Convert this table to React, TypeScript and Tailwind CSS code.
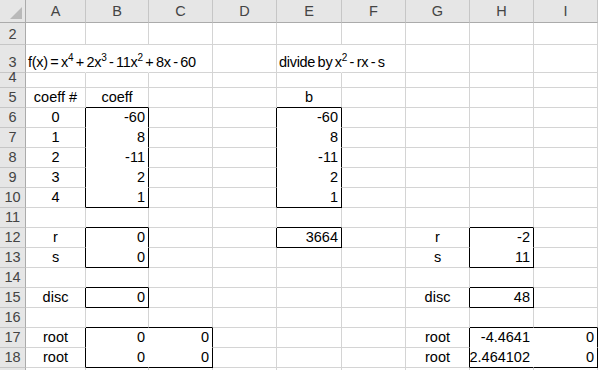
import React from 'react';

type Align = 'left' | 'center' | 'right';

interface CellValue {
  v: React.ReactNode;
  align: Align;
}

interface Range {
  r1: number;
  r2: number;
  c1: number;
  c2: number;
}

const COLS = ['A', 'B', 'C', 'D', 'E', 'F', 'G', 'H', 'I'];
const FIRST_ROW = 2;
const LAST_ROW = 19;

// Ranges with a thin black outline (white fill, so no gridlines inside)
const BOXES: Range[] = [
  { r1: 6, r2: 10, c1: 2, c2: 2 },
  { r1: 6, r2: 10, c1: 5, c2: 5 },
  { r1: 12, r2: 13, c1: 2, c2: 2 },
  { r1: 12, r2: 12, c1: 5, c2: 5 },
  { r1: 12, r2: 13, c1: 8, c2: 8 },
  { r1: 15, r2: 15, c1: 2, c2: 2 },
  { r1: 15, r2: 15, c1: 8, c2: 8 },
  { r1: 17, r2: 18, c1: 2, c2: 3 },
  { r1: 17, r2: 18, c1: 8, c2: 9 },
];

// Cells whose text spills into the next column, hiding that gridline
const SPILL = new Set(['3:1', '3:2', '3:5']);

const Sup = ({ children }: { children: React.ReactNode }) => (
  <sup className="text-[10px] -top-[6px]">{children}</sup>
);

// formula text is set a little tighter so it runs as far as in the sheet
const Formula = ({ children }: { children: React.ReactNode }) => (
  <span className="tracking-[-0.3px] [word-spacing:-1.2px]">{children}</span>
);

const num = (v: string): CellValue => ({ v, align: 'right' });
const mid = (v: string): CellValue => ({ v, align: 'center' });

const CELLS: Record<string, CellValue> = {
  A3: {
    align: 'left',
    v: (
      <Formula>
        f(x) = x<Sup>4</Sup> + 2x<Sup>3</Sup> - 11x<Sup>2</Sup> + 8x - 60
      </Formula>
    ),
  },
  E3: {
    align: 'left',
    v: (
      <Formula>
        divide by x<Sup>2</Sup> - rx - s
      </Formula>
    ),
  },
  A5: mid('coeff #'),
  B5: mid('coeff'),
  E5: mid('b'),
  A6: mid('0'),
  A7: mid('1'),
  A8: mid('2'),
  A9: mid('3'),
  A10: mid('4'),
  B6: num('-60'),
  B7: num('8'),
  B8: num('-11'),
  B9: num('2'),
  B10: num('1'),
  E6: num('-60'),
  E7: num('8'),
  E8: num('-11'),
  E9: num('2'),
  E10: num('1'),
  A12: mid('r'),
  B12: num('0'),
  E12: num('3664'),
  G12: mid('r'),
  H12: num('-2'),
  A13: mid('s'),
  B13: num('0'),
  G13: mid('s'),
  H13: num('11'),
  A15: mid('disc'),
  B15: num('0'),
  G15: mid('disc'),
  H15: num('48'),
  A17: mid('root'),
  B17: num('0'),
  C17: num('0'),
  G17: mid('root'),
  H17: num('-4.4641'),
  I17: num('0'),
  A18: mid('root'),
  B18: num('0'),
  C18: num('0'),
  G18: mid('root'),
  H18: num('2.464102'),
  I18: num('0'),
};

const boxAt = (r: number, c: number) =>
  BOXES.findIndex((b) => r >= b.r1 && r <= b.r2 && c >= b.c1 && c <= b.c2);

type Edge = 'grid' | 'box' | 'none';

const edgeBetween = (a: number, b: number): Edge => {
  if (a !== b && (a >= 0 || b >= 0)) return 'box';
  if (a === b && a >= 0) return 'none';
  return 'grid';
};

const RIGHT: Record<Edge, string> = {
  grid: 'border-r-[#d4d4d4]',
  box: 'border-r-black',
  none: 'border-r-transparent',
};

const BOTTOM: Record<Edge, string> = {
  grid: 'border-b-[#d4d4d4]',
  box: 'border-b-black',
  none: 'border-b-transparent',
};

const ALIGN: Record<Align, string> = {
  left: 'justify-start pl-[2px]',
  center: 'justify-center',
  right: 'justify-end pr-[3px]',
};

function SheetCell({ r, c }: { r: number; c: number }) {
  const here = boxAt(r, c);
  let right = edgeBetween(here, boxAt(r, c + 1));
  const bottom = edgeBetween(here, boxAt(r + 1, c));
  if (SPILL.has(`${r}:${c}`)) right = 'none';
  const cell = CELLS[`${COLS[c - 1]}${r}`];

  return (
    <div
      className={`flex items-end whitespace-nowrap border-r border-b pb-px leading-[17px] text-black ${RIGHT[right]} ${BOTTOM[bottom]} ${
        cell ? ALIGN[cell.align] : ''
      }`}
    >
      {cell && <span>{cell.v}</span>}
    </div>
  );
}

function CornerCell() {
  return (
    <div className="relative bg-[#e6e6e6] border-r border-b border-r-[#ababab] border-b-[#ababab]">
      <svg className="absolute right-[3px] bottom-[3px]" width="12" height="12" viewBox="0 0 12 12">
        <polygon points="12,0 12,12 0,12" fill="#b9b9b9" />
      </svg>
    </div>
  );
}

export default function App() {
  const rows: number[] = [];
  for (let r = FIRST_ROW; r <= LAST_ROW; r++) rows.push(r);

  return (
    <div className="w-[598px] h-[370px] overflow-hidden bg-white font-['Liberation_Sans',Arial,sans-serif] text-[14.5px]">
      <div className="grid grid-cols-[26px_60px_63px_64px_64px_65px_64px_64px_64px_64px] grid-rows-[23px_22px_28px_15px_repeat(15,20px)]">
        <CornerCell />
        {COLS.map((col) => (
          <div
            key={col}
            className="flex items-end justify-center pb-[2px] leading-[17px] bg-[#e6e6e6] text-[#444] border-r border-b border-r-[#c6c6c6] border-b-[#ababab]"
          >
            {col}
          </div>
        ))}
        {rows.map((r) => (
          <React.Fragment key={r}>
            {/* the last row only peeks in at the bottom edge, so no number */}
            <div className="flex items-end justify-center pb-px leading-[17px] bg-[#e6e6e6] text-[#444] border-r border-b border-r-[#ababab] border-b-[#c6c6c6]">
              {r < LAST_ROW ? r : ''}
            </div>
            {COLS.map((_, i) => (
              <SheetCell key={i} r={r} c={i + 1} />
            ))}
          </React.Fragment>
        ))}
      </div>
    </div>
  );
}
